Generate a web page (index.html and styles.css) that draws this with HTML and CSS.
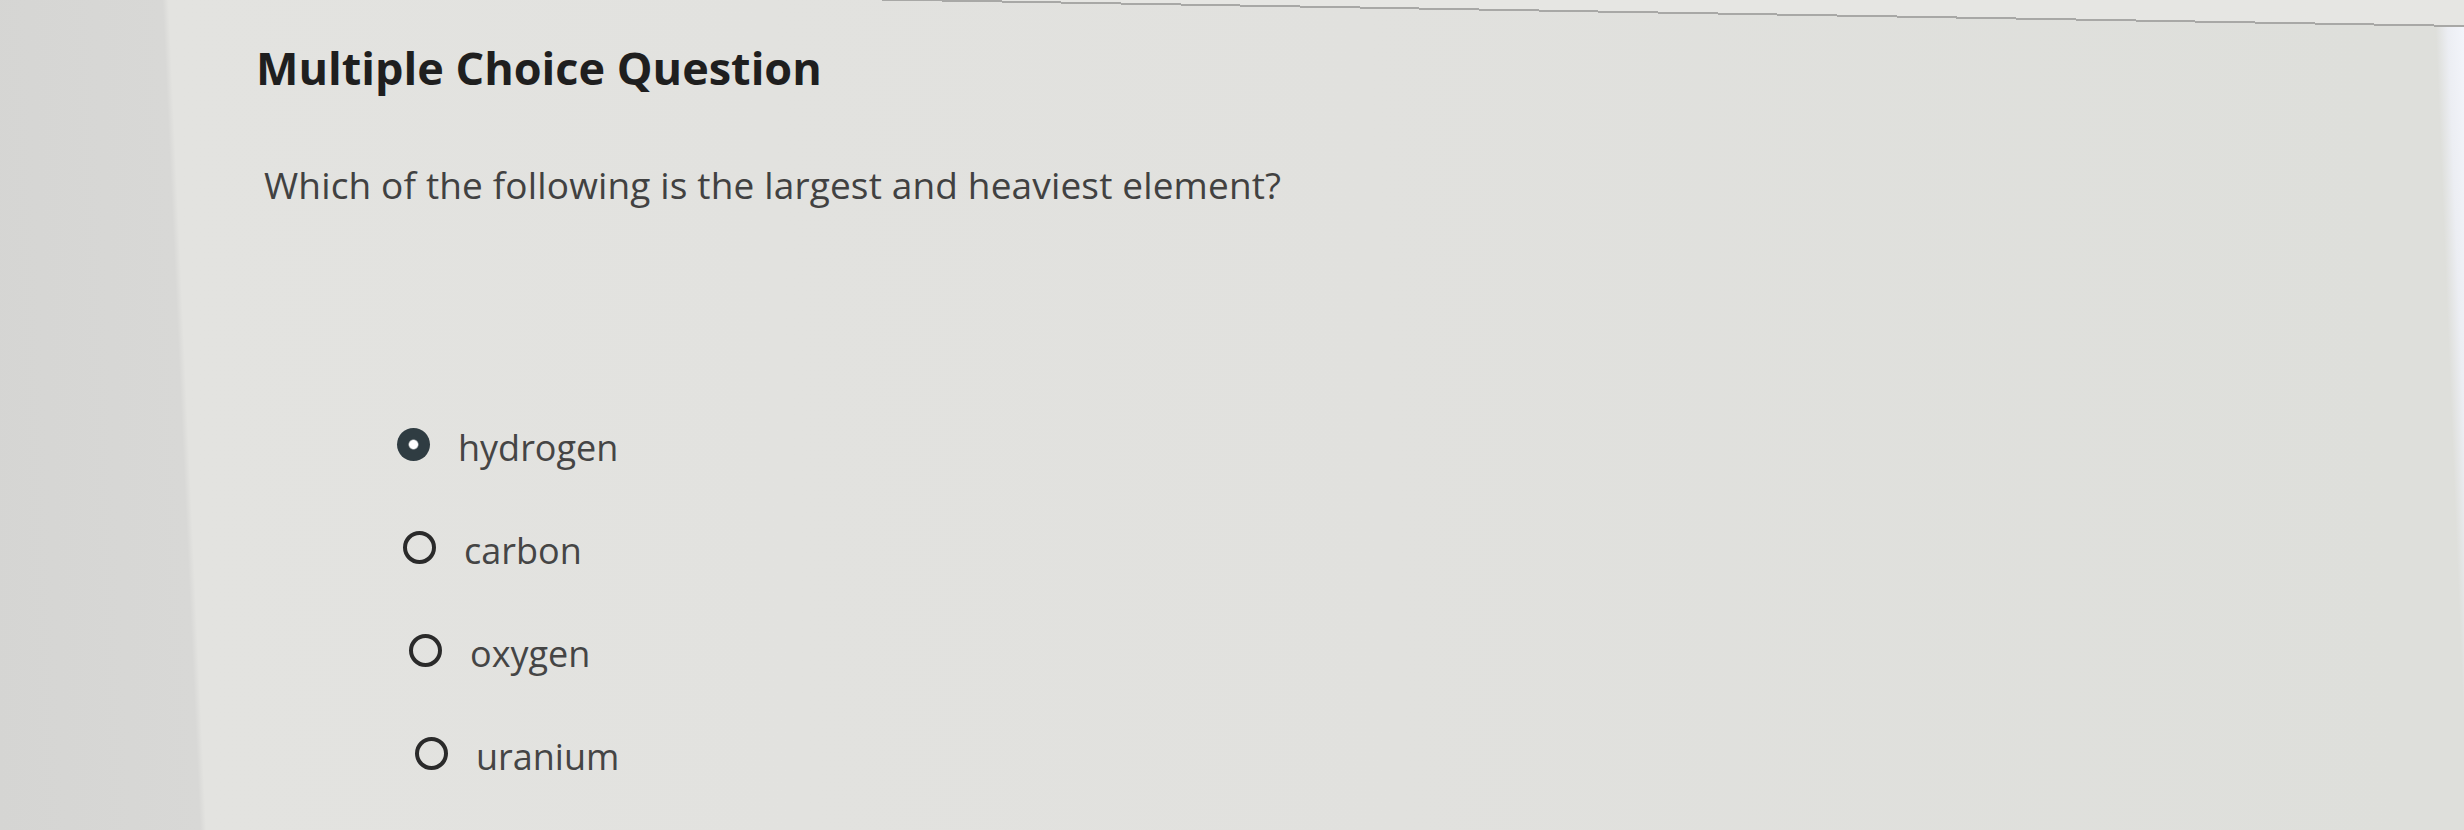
FILE: index.html
```html
<!DOCTYPE html>
<html lang="en">
<head>
<meta charset="utf-8">
<title>Multiple Choice Question</title>
<link rel="stylesheet" href="styles.css">
</head>
<body>
<div class="screen">
  <div class="content">
    <h1 class="title">Multiple Choice Question</h1>
    <p class="prompt">Which of the following is the largest and heaviest element?</p>
    <ul class="choices">
      <li class="choice choice-1"><span class="radio radio-selected"></span><span class="label">hydrogen</span></li>
      <li class="choice choice-2"><span class="radio"></span><span class="label">carbon</span></li>
      <li class="choice choice-3"><span class="radio"></span><span class="label">oxygen</span></li>
      <li class="choice choice-4"><span class="radio"></span><span class="label">uranium</span></li>
    </ul>
  </div>
</div>
</body>
</html>
```

FILE: styles.css
```css
html, body {
  margin: 0;
  padding: 0;
}

body {
  width: 2464px;
  height: 830px;
  overflow: hidden;
  font-family: "Open Sans", "Liberation Sans", sans-serif;
}

.screen {
  width: 2464px;
  height: 830px;
  box-sizing: border-box;
  background:
    linear-gradient(180.96deg, #e6e6e3 0 25px, #a8a8a6 25px 27px, transparent 27px) top left / 100% 40px no-repeat,
    linear-gradient(87.7deg, transparent 0 2466px, #eceef3 2478px, #f3f5fb 2495px),
    linear-gradient(87.4deg, #d5d5d3 0, #d8d8d6 200px, #e3e3e0 206px, #e1e1de 1400px, #dedfdb 2400px);
}

.content {
  padding: 41px 0 0 256px;
  display: flex;
  flex-direction: column;
}

.title {
  margin: 0;
  font-size: 45px;
  line-height: 1.2;
  font-weight: 700;
  color: #1f1f1f;
}

.prompt {
  margin: 68px 0 0 8px;
  font-size: 37px;
  line-height: 1.2;
  color: #414141;
  letter-spacing: 0.15px;
}

.choices {
  list-style: none;
  margin: 220px 0 0 141px;
  padding: 0;
  display: flex;
  flex-direction: column;
  gap: 61px;
}

.choice {
  display: flex;
  align-items: center;
  height: 42px;
  font-size: 36px;
  color: #454545;
}

.choice-2 { margin-left: 6px; }
.choice-3 { margin-left: 12px; }
.choice-4 { margin-left: 18px; }

.radio {
  flex: none;
  width: 33px;
  height: 33px;
  box-sizing: border-box;
  border: 4px solid #2a2a2a;
  border-radius: 50%;
  margin-right: 28px;
  margin-top: -8px;
}

.radio-selected {
  border: none;
  background: radial-gradient(circle, #ffffff 0 4px, #2f3c42 5.5px);
}

.label {
  line-height: 42px;
}
```
